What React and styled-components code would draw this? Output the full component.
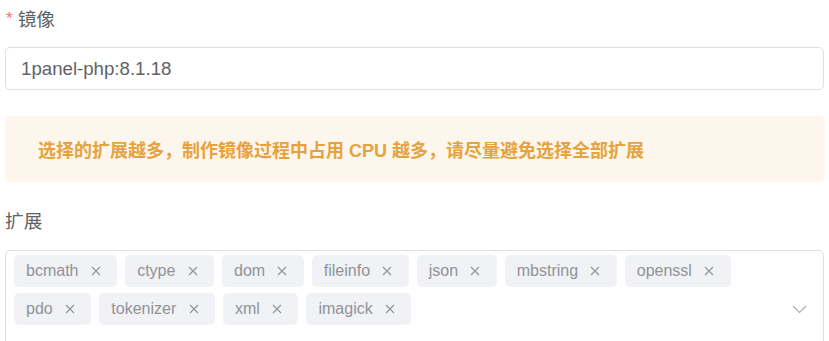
import React from 'react'
import styled, {createGlobalStyle} from 'styled-components'

const GlobalStyle = createGlobalStyle`
  body {
    margin: 0;
    background: #ffffff;
    font-family: "Liberation Sans", "Noto Sans CJK SC", sans-serif;
  }
`;

const extensions = [
    'bcmath', 'ctype', 'dom', 'fileinfo', 'json', 'mbstring', 'openssl',
    'pdo', 'tokenizer', 'xml', 'imagick'
];

const CloseIcon = () => (
    <svg width="12" height="12" viewBox="0 0 12 12">
        <path d="M2 2 L10 10 M10 2 L2 10" stroke="#909399" strokeWidth="1.1" fill="none"/>
    </svg>
);

const ChevronIcon = () => (
    <svg width="15" height="9" viewBox="0 0 15 9">
        <polyline points="1,1 7.5,7.5 14,1" stroke="#a8abb2" strokeWidth="1.2" fill="none"/>
    </svg>
);

const App = () => {
    return (
        <Page>
            <GlobalStyle/>
            <FormLabel required>镜像</FormLabel>
            <Input type="text" defaultValue="1panel-php:8.1.18" readOnly/>
            <Alert>选择的扩展越多，制作镜像过程中占用 CPU 越多，请尽量避免选择全部扩展</Alert>
            <FormLabel spaced>扩展</FormLabel>
            <Select>
                <TagsWrap>
                    {extensions.map(ext => (
                        <Tag key={ext}>
                            {ext}
                            <TagClose><CloseIcon/></TagClose>
                        </Tag>
                    ))}
                    <FilterInput/>
                </TagsWrap>
                <Suffix><ChevronIcon/></Suffix>
            </Select>
        </Page>
    )
};

const Page = styled.div`
    padding: 0 5px;
    display: flex;
    flex-direction: column;
`;

const FormLabel = styled.label`
    height: 38px;
    line-height: 38px;
    font-size: 18.67px;
    color: #606266;
    margin-top: ${props => props.spaced ? '21px' : '0'};
    margin-bottom: 9px;
    &::before {
        content: ${props => props.required ? '"*"' : 'none'};
        color: #f56c6c;
        font-size: 17px;
        margin-left: 1px;
        margin-right: 5px;
        vertical-align: 2px;
    }
`;

const Input = styled.input`
    box-sizing: border-box;
    height: 43px;
    width: 100%;
    border: 1px solid #dcdfe6;
    border-radius: 5px;
    padding: 0 15px;
    font-family: "Liberation Sans", "Noto Sans CJK SC", sans-serif;
    font-size: 18.67px;
    color: #606266;
    outline: none;
`;

const Alert = styled.div`
    margin-top: 26px;
    box-sizing: border-box;
    height: 66px;
    width: 820px;
    display: flex;
    align-items: center;
    padding: 0 33px;
    background: #fdf6ec;
    border-radius: 6px;
    color: #e6a23c;
    font-size: 18px;
    font-weight: 700;
`;

const Select = styled.div`
    box-sizing: border-box;
    display: flex;
    align-items: center;
    border: 1px solid #dcdfe6;
    border-radius: 5px;
    padding: 4px 0 4px 8px;
`;

const TagsWrap = styled.div`
    flex: 1;
    display: flex;
    flex-wrap: wrap;
    column-gap: 8px;
    row-gap: 6px;
`;

const Tag = styled.span`
    box-sizing: border-box;
    height: 32px;
    display: inline-flex;
    align-items: center;
    padding: 0 12px;
    background: #f0f2f5;
    border-radius: 5px;
    color: #909399;
    font-size: 16px;
`;

const TagClose = styled.span`
    width: 18.67px;
    height: 18.67px;
    margin-left: 8px;
    display: inline-flex;
    align-items: center;
    justify-content: center;
`;

const FilterInput = styled.div`
    height: 32px;
    width: 100%;
`;

const Suffix = styled.div`
    width: 48px;
    display: flex;
    justify-content: center;
`;

export default App
